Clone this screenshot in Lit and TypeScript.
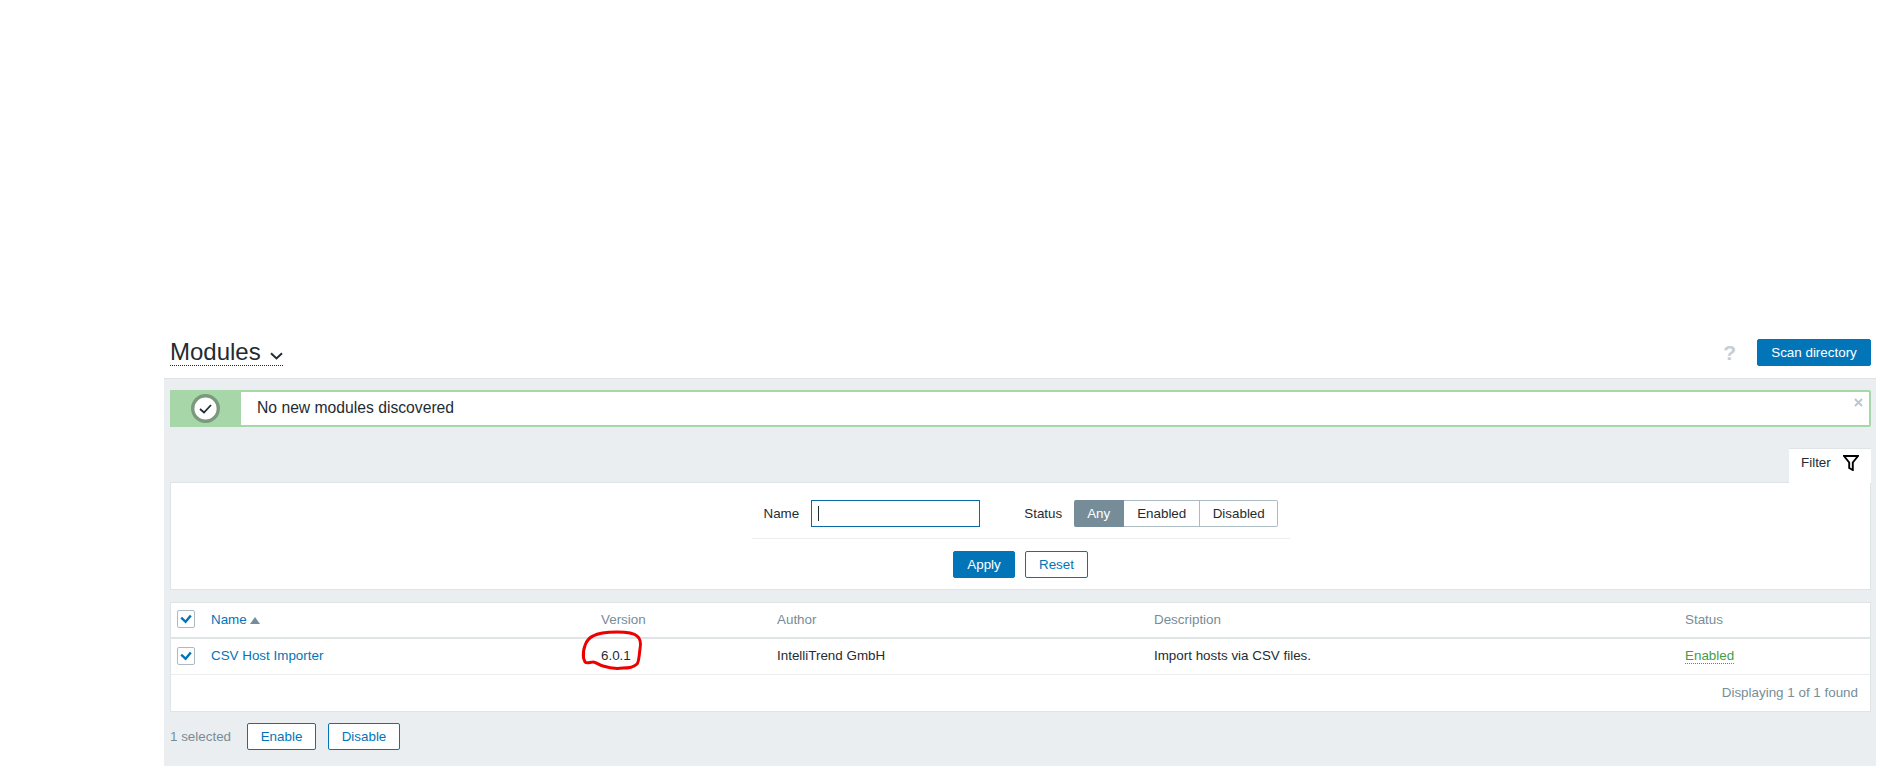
import { LitElement, html, css } from "lit";
import { customElement } from "lit/decorators.js";

const check = html`<svg width="12" height="10" viewBox="0 0 12 10"><path d="M1.2 3.6 5.6 7.8 10.8 1.6" fill="none" stroke="#0275b8" stroke-width="2.4"/></svg>`;

@customElement("app-root")
export class AppRoot extends LitElement {
  static styles = css`
    :host { display: block; font-family: "Liberation Sans", Arial, sans-serif; font-size: 13.4px; color: #1f2c33; background: #fff; height: 766px; overflow: hidden; }
    * { box-sizing: border-box; }
    .page { margin: 0 18px 0 164px; height: 766px; display: flex; flex-direction: column; }
    .head { height: 378px; flex: none; display: flex; align-items: flex-end; justify-content: space-between; padding: 0 5px 12px 6px; }
    .title { display: flex; align-items: center; height: 28px; width: 113px; border-bottom: 1px dotted #1f2c33; font-size: 24px; line-height: 28px; gap: 9px; }
    .title svg { margin-top: 8px; }
    .actions { display: flex; align-items: center; gap: 21px; }
    .help { font-size: 21px; font-weight: bold; color: #c5ced3; line-height: 27px; }
    .btn { display: flex; align-items: center; justify-content: center; height: 27px; border-radius: 2px; border: 1px solid #0275b8; color: #0275b8; background: #fff; }
    .btn.primary { background: #0275b8; color: #fff; }
    .scan { width: 114px; }
    .body { flex: 1; background: #ebeef0; border-top: 1px solid #dfe4e7; padding: 11px 5px 0 6px; }
    .msg { height: 37px; display: flex; border: 2px solid #a7d7a9; border-radius: 2px; background: #fff; position: relative; font-size: 15.7px; }
    .msg-icon { width: 71px; background: #a7d7a9; display: flex; align-items: center; justify-content: center; margin: -2px 0 -2px -2px; padding-right: 1px; }
    .msg-text { padding-left: 16px; line-height: 32px; }
    .close { position: absolute; right: 6px; top: 6px; }
    .tabs { display: flex; justify-content: flex-end; margin-top: 21px; position: relative; z-index: 1; }
    .tab { width: 82px; height: 35px; background: #fff; display: flex; align-items: flex-start; gap: 12px; padding: 6px 0 0 12px; border-top: 1px solid #dfe4e7; line-height: 16px; margin-bottom: -1px; }
    .filter { height: 108px; background: #fff; border: 1px solid #dfe4e7; display: flex; flex-direction: column; align-items: center; }
    .filter-top { width: 538px; height: 56px; border-bottom: 1px solid #ebeef0; display: flex; align-items: flex-start; padding: 17px 0 0 12px; }
    .lab { line-height: 27px; }
    .input { width: 169px; height: 27px; border: 1px solid #0a69a6; margin-left: 12px; padding: 5px 0 0 6px; }
    .caret { width: 1px; height: 15px; background: #1f2c33; }
    .status { margin-left: 44px; }
    .seg { display: flex; margin-left: 12px; height: 27px; line-height: 25px; text-align: center; }
    .seg div { border: 1px solid #acbbc2; border-left: 0; }
    .seg .on { width: 50px; background: #768d99; border-color: #768d99; color: #fff; border-radius: 2px 0 0 2px; }
    .seg .b { width: 76px; }
    .seg .c { width: 78px; border-radius: 0 2px 2px 0; }
    .filter-btns { display: flex; gap: 10px; margin-top: 12px; }
    .apply { width: 62px; }
    .reset { width: 63px; }
    .table { margin-top: 12px; background: #fff; border: 1px solid #dfe4e7; height: 110px; }
    .row { display: grid; grid-template-columns: 40px 390px 176px 377px 531px 1fr; align-items: center; }
    .row.th { height: 36px; border-bottom: 2px solid #dfe4e7; color: #768d99; padding-bottom: 2px; }
    .row.td { height: 36px; border-bottom: 1px solid #ebeef0; padding-bottom: 2px; }
    .cb { width: 18px; height: 18px; margin-left: 6px; border: 1px solid #acbbc2; border-radius: 2px; display: flex; align-items: center; justify-content: center; background: #fff; }
    .link { color: #0275b8; }
    .sort { display: inline-block; margin-left: 3px; width: 0; height: 0; border-left: 5px solid transparent; border-right: 5px solid transparent; border-bottom: 7px solid #768d99; }
    .ver { position: relative; }
    .ring { position: absolute; left: -19px; top: -17px; overflow: visible; }
    .on-status { color: #429e47; border-bottom: 1px dotted #429e47; }
    .paging { height: 36px; text-align: right; line-height: 35px; padding-right: 12px; color: #768d99; }
    .foot { display: flex; align-items: center; margin-top: 11px; }
    .count { color: #768d99; width: 77px; }
    .enable { width: 69px; margin-right: 12px; }
    .disable { width: 72px; }
  `;

  render() {
    return html`<div class="page">
      <div class="head">
        <div class="title">Modules
          <svg width="13" height="8" viewBox="0 0 13 8"><path d="M1 1.2 6.5 6.4 12 1.2" fill="none" stroke="#1f2c33" stroke-width="2"/></svg>
        </div>
        <div class="actions">
          <span class="help">?</span>
          <div class="btn primary scan">Scan directory</div>
        </div>
      </div>
      <div class="body">
        <div class="msg">
          <div class="msg-icon">
            <svg width="29" height="29" viewBox="0 0 29 29"><circle cx="14.5" cy="14.5" r="12.8" fill="#fff" stroke="#7a9a7d" stroke-width="3.4"/><path d="M9 15 13 18.5 20 11" fill="none" stroke="#1f2c33" stroke-width="1.8"/></svg>
          </div>
          <div class="msg-text">No new modules discovered</div>
          <svg class="close" width="9" height="9" viewBox="0 0 9 9"><path d="M1 1 8 8M8 1 1 8" stroke="#bcc8ce" stroke-width="2"/></svg>
        </div>
        <div class="tabs">
          <div class="tab">Filter
            <svg width="16" height="16" viewBox="0 0 16 16"><path d="M1 1H15L9.8 7.5V15L6.2 13V7.5Z" fill="none" stroke="#000" stroke-width="1.9"/></svg>
          </div>
        </div>
        <div class="filter">
          <div class="filter-top">
            <span class="lab">Name</span>
            <div class="input"><div class="caret"></div></div>
            <span class="lab status">Status</span>
            <div class="seg"><div class="on">Any</div><div class="b">Enabled</div><div class="c">Disabled</div></div>
          </div>
          <div class="filter-btns">
            <div class="btn primary apply">Apply</div>
            <div class="btn reset">Reset</div>
          </div>
        </div>
        <div class="table">
          <div class="row th">
            <div><div class="cb">${check}</div></div>
            <div class="link">Name<span class="sort"></span></div>
            <div>Version</div><div>Author</div><div>Description</div><div>Status</div>
          </div>
          <div class="row td">
            <div><div class="cb">${check}</div></div>
            <div class="link">CSV Host Importer</div>
            <div class="ver">6.0.1
              <svg class="ring" width="60" height="40" viewBox="0 0 60 40"><path d="M1.5 27C.5 18 4 8 11 5 18 1 28 1 35 1 44 1 52 2 55 5 59 8 59 13 58 18 57 25 57 31 55 33 51 37 46 37 41 37 34 38 27 37 21 35 17 34 14 31 11 31 8 31 5 33 3 31Z" fill="none" stroke="#ee0000" stroke-width="3"/></svg>
            </div>
            <div>IntelliTrend GmbH</div>
            <div>Import hosts via CSV files.</div>
            <div><span class="on-status">Enabled</span></div>
          </div>
          <div class="paging">Displaying 1 of 1 found</div>
        </div>
        <div class="foot">
          <span class="count">1 selected</span>
          <div class="btn enable">Enable</div>
          <div class="btn disable">Disable</div>
        </div>
      </div>
    </div>`;
  }
}
